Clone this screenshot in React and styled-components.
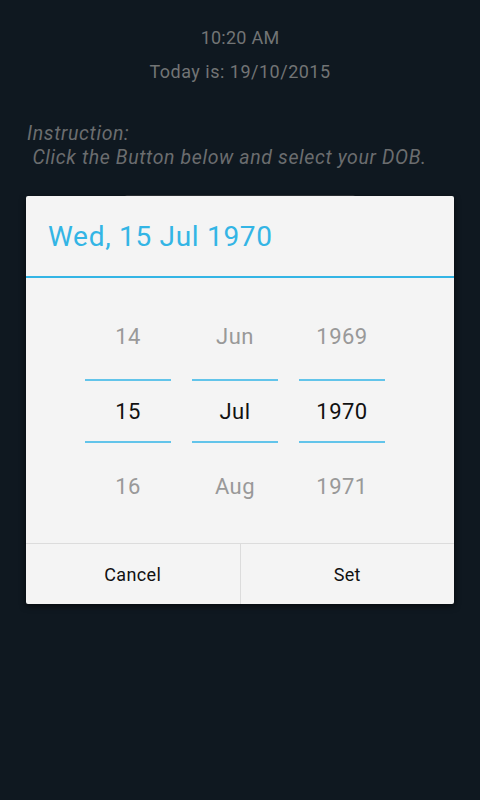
import React from "react";
import styled, { createGlobalStyle } from "styled-components";

const GlobalStyle = createGlobalStyle`
  html, body {
    margin: 0;
    padding: 0;
    background: #0f1820;
    font-family: Roboto, "Noto Sans", sans-serif;
  }
`;

const Screen = styled.div`
  position: relative;
  width: 480px;
  height: 800px;
  overflow: hidden;
  background: #0f1820;
`;

const Content = styled.div`
  display: flex;
  flex-direction: column;
  padding-top: 27px;
`;

const Status = styled.div`
  text-align: center;
  color: #727475;
  font-size: 18px;
  line-height: 22px;
  letter-spacing: ${(p) => p.spacing || 0}px;
  margin-bottom: ${(p) => p.gap || 0}px;
`;

const Instruction = styled.div`
  padding-left: 27px;
  margin-top: 39px;
  color: #6b6d6f;
  font-style: italic;
  font-size: 19.5px;
  line-height: 24px;
  letter-spacing: 0.62px;
  white-space: pre;
`;

const PickButton = styled.button`
  align-self: center;
  margin-top: 25px;
  width: 230px;
  height: 48px;
  border: none;
  border-radius: 2px;
  background: #30353a;
`;

const Dialog = styled.div`
  position: absolute;
  top: 196px;
  left: 26px;
  width: 428px;
  background: #f4f4f4;
  border-radius: 2px;
  box-shadow: 0 2px 6px rgba(0, 0, 0, 0.6);
  display: flex;
  flex-direction: column;
`;

const Header = styled.div`
  height: 80px;
  display: flex;
  align-items: center;
  padding-left: 22px;
  color: #33b5e5;
  font-size: 28px;
  letter-spacing: 0.7px;
  border-bottom: 2px solid #33b5e5;
`;

const Picker = styled.div`
  display: flex;
  gap: 21px;
  padding: 15px 0 14px 59px;
`;

const Column = styled.div`
  width: 86px;
  display: flex;
  flex-direction: column;
`;

const Cell = styled.div`
  height: ${(p) => (p.selected ? 60 : 86)}px;
  display: flex;
  align-items: center;
  justify-content: center;
  font-size: 22px;
  letter-spacing: 0.5px;
  color: ${(p) => (p.selected ? "#111" : "#999")};
`;

const Divider = styled.div`
  height: 2px;
  background: #62c4ea;
`;

const Buttons = styled.div`
  display: flex;
  border-top: 1px solid #dcdcdc;
  height: 60px;
`;

const DialogButton = styled.button`
  flex: 1;
  border: none;
  background: transparent;
  font-family: inherit;
  font-size: 18px;
  letter-spacing: 0.35px;
  color: #111;
  padding: 0;
  & + & {
    border-left: 1px solid #dcdcdc;
  }
`;

const columns = [
  ["14", "15", "16"],
  ["Jun", "Jul", "Aug"],
  ["1969", "1970", "1971"],
];

export default function App() {
  return (
    <Screen>
      <GlobalStyle />
      <Content>
        <Status gap={12} spacing={0.25}>10:20 AM</Status>
        <Status spacing={0.5}>Today is: 19/10/2015</Status>
        <Instruction>
          {"Instruction:\n Click the Button below and select your DOB."}
        </Instruction>
        <PickButton />
      </Content>
      <Dialog>
        <Header>Wed, 15 Jul 1970</Header>
        <Picker>
          {columns.map(([prev, cur, next]) => (
            <Column key={cur}>
              <Cell>{prev}</Cell>
              <Divider />
              <Cell selected>{cur}</Cell>
              <Divider />
              <Cell>{next}</Cell>
            </Column>
          ))}
        </Picker>
        <Buttons>
          <DialogButton>Cancel</DialogButton>
          <DialogButton>Set</DialogButton>
        </Buttons>
      </Dialog>
    </Screen>
  );
}
